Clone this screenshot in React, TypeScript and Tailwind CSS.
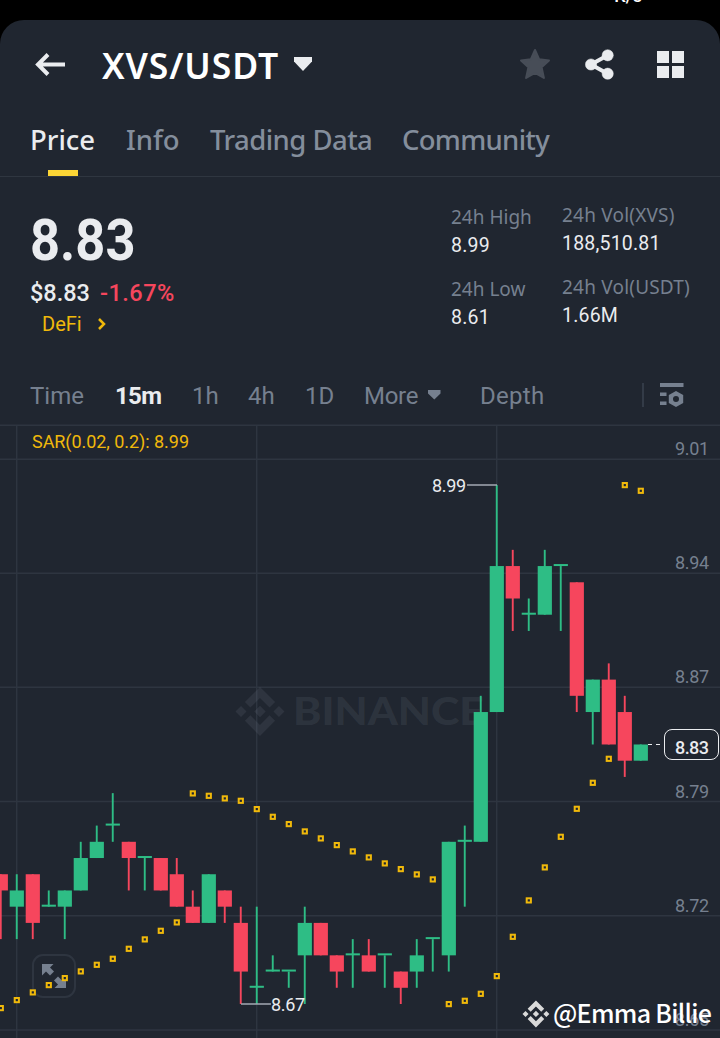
import React from "react";

type Candle = { o: number; c: number; h: number; l: number };

const STEP = 16;
const X0 = 0.7;
const BASE_Y = 1004;
const TICK = 16.22;

// open, close, high, low in cents above 8.67
const candles: Candle[] = [
  [8, 7, 8, 4],
  [6, 7, 8, 4],
  [8, 5, 8, 4],
  [6, 6, 7, 6],
  [6, 7, 7, 4],
  [7, 9, 10, 7],
  [9, 10, 11, 9],
  [11, 11, 13, 10],
  [10, 9, 10, 7],
  [9, 9, 9, 7],
  [9, 7, 9, 7],
  [8, 6, 9, 6],
  [6, 5, 7, 5],
  [5, 8, 8, 5],
  [7, 6, 7, 5],
  [5, 2, 6, 0],
  [1, 1, 6, 0],
  [2, 2, 3, 2],
  [2, 2, 2, 1],
  [3, 5, 6, 0],
  [5, 3, 5, 3],
  [3, 2, 3, 1],
  [3, 3, 4, 1],
  [3, 2, 4, 2],
  [3, 3, 3, 1],
  [2, 1, 2, 0],
  [2, 3, 4, 1],
  [4, 4, 4, 2],
  [3, 10, 10, 2],
  [10, 10, 11, 6],
  [10, 18, 19, 10],
  [18, 27, 32, 18],
  [27, 25, 28, 23],
  [24, 24, 25, 23],
  [24, 27, 28, 24],
  [27, 27, 27, 23],
  [26, 19, 26, 18],
  [18, 20, 20, 16],
  [20, 16, 21, 16],
  [18, 15, 19, 14],
  [15, 16, 16, 15],
].map(([o, c, h, l]) => ({ o, c, h, l }));

const sar = [
  1008, 1000, 992.3, 985, 978, 971.3, 964.7, 958.7, 948.7, 939.3, 930.7, 922.3,
  793.3, 795.7, 798.3, 800.7, 809, 816.7, 824, 831.3, 838.3, 845, 851.3, 857.3,
  863.3, 869, 874.3, 879.3, 1004, 1000.7, 993.7, 976, 936.7, 900.3, 867.3,
  836.7, 808.7, 782.7, 758.7, 485, 490.7,
];

const gridY = [425.3, 459.3, 573.3, 687.3, 801.5, 915.7, 1030];
const gridX = [16.7, 256.7, 496.7];

const axisLabels = [
  { text: "9.01", y: 455 },
  { text: "8.94", y: 569 },
  { text: "8.87", y: 683 },
  { text: "8.79", y: 798 },
  { text: "8.72", y: 912 },
  { text: "8.65", y: 1026 },
];

const priceY = (k: number) => BASE_Y - TICK * k;

function BinanceMark() {
  return (
    <path d="M24 0 38.8 14.8 33.4 20.2 24 10.8 14.6 20.2 9.2 14.8zM5.4 18.6 10.8 24 5.4 29.4 0 24zM42.6 18.6 48 24 42.6 29.4 37.2 24zM24 18.4 29.6 24 24 29.6 18.4 24zM14.6 27.8 24 37.2 33.4 27.8 38.8 33.2 24 48 9.2 33.2z" />
  );
}

function Header() {
  return (
    <div className="flex h-[88px] items-center pl-[34px] pr-[36px] text-[#eaecef]">
      <svg className="mt-px" width="32" height="26" viewBox="0 0 32 26" fill="none" stroke="currentColor" strokeWidth="4">
        <path d="M14 2.5 4 12.5 14 22.5M3.5 12.5H31" />
      </svg>
      <h1 className="ml-[36px] mt-[3px] w-[177px] whitespace-nowrap font-['Noto_Sans'] text-[35.5px] font-semibold leading-none tracking-[0.9px] text-white">
        XVS/USDT
      </h1>
      <svg className="ml-[15px]" width="18" height="15" viewBox="0 0 18 15" fill="currentColor">
        <path d="M0 0H18V4.5L9 14 0 4.5z" />
      </svg>
      <div className="ml-auto flex items-center">
        <svg width="32" height="32" viewBox="0 0 32 32" fill="#474d57" stroke="#474d57" strokeWidth="2" strokeLinejoin="round">
          <path d="M16 2 20.1 11.2 30 12.4 22.6 19.2 24.9 30 16 25 7.1 30 9.4 19.2 2 12.4 11.9 11.2z" />
        </svg>
        <svg className="ml-[34px]" width="29" height="31" viewBox="0 0 29 31" fill="currentColor" stroke="currentColor">
          <path d="M22.7 6.2 6 15.5 22.7 24.8" fill="none" strokeWidth="4" />
          <circle cx="22.7" cy="6.3" r="5.6" strokeWidth="0.5" />
          <circle cx="6" cy="15.5" r="5.6" strokeWidth="0.5" />
          <circle cx="22.7" cy="24.7" r="5.6" strokeWidth="0.5" />
        </svg>
        <div className="ml-[43px] grid grid-cols-2 gap-[3px]">
          <span className="size-[12px] bg-[#eaecef]" />
          <span className="size-[12px] bg-[#eaecef]" />
          <span className="size-[12px] bg-[#eaecef]" />
          <span className="size-[12px] bg-[#eaecef]" />
        </div>
      </div>
    </div>
  );
}

function Tabs() {
  return (
    <nav className="flex h-[69px] border-b border-[#2f3640] pl-[30px] font-['Noto_Sans'] text-[27.5px] font-medium leading-[64px] whitespace-nowrap text-[#848e9c]">
      <div className="relative w-[96px] text-[#eaecef]">
        Price
        <span className="absolute bottom-0 left-[18px] h-[6px] w-[30px] bg-[#fcd535]" />
      </div>
      <div className="w-[84px]">Info</div>
      <div className="w-[192px] tracking-[-0.55px]">Trading Data</div>
      <div className="tracking-[-0.7px]">Community</div>
    </nav>
  );
}

function Stat({ label, value }: { label: string; value: string }) {
  return (
    <div className="h-[72px] whitespace-nowrap leading-[28px]">
      <p className="font-['Noto_Sans'] text-[19px] text-[#76808f]">{label}</p>
      <p className="mt-px font-[Roboto] text-[19.5px] tracking-[0.2px] text-[#eaecef]">{value}</p>
    </div>
  );
}

function Summary() {
  return (
    <div className="flex h-[189px] pl-[30px]">
      <div className="w-[421px] font-[Roboto]">
        <p className="mt-[31px] w-fit origin-left scale-x-[0.92] text-[57px] font-bold leading-[66px] text-[#eaecef]">8.83</p>
        <p className="mt-[4px] flex text-[23.5px] font-medium leading-[30px]">
          <span className="w-[70px] text-[#eaecef]">$8.83</span>
          <span className="tracking-[0.5px] text-[#f6465d]">-1.67%</span>
        </p>
        <p className="ml-[12px] mt-px flex items-center text-[20px] leading-[30px] text-[#f0b90b]">
          DeFi
          <svg className="ml-[15px]" width="10" height="12" viewBox="0 0 10 12" fill="none" stroke="currentColor" strokeWidth="2.5">
            <path d="M2 1 7 6 2 11" />
          </svg>
        </p>
      </div>
      <div className="mt-[26px] w-[111px]">
        <Stat label="24h High" value="8.99" />
        <Stat label="24h Low" value="8.61" />
      </div>
      <div className="mt-[24px] tracking-[0.2px]">
        <Stat label="24h Vol(XVS)" value="188,510.81" />
        <Stat label="24h Vol(USDT)" value="1.66M" />
      </div>
    </div>
  );
}

function Intervals() {
  return (
    <div className="flex h-[58px] items-center pl-[30px] font-[Roboto] text-[24px] leading-[30px] whitespace-nowrap text-[#76808f]">
      <span className="mt-[2px] w-[85px]">Time</span>
      <span className="mt-[2px] w-[77px] font-bold tracking-[-0.7px] text-[#eaecef]">15m</span>
      <span className="mt-[2px] w-[56px]">1h</span>
      <span className="mt-[2px] w-[57px]">4h</span>
      <span className="mt-[2px] w-[59px]">1D</span>
      <span className="mt-[2px] w-[64px] tracking-[-0.3px]">More</span>
      <svg className="mr-[39px]" width="13" height="10" viewBox="0 0 13 10" fill="currentColor">
        <path d="M0 0H12.5V3.5L6.3 9.5 0 3.5z" />
      </svg>
      <span className="mt-[2px] w-[162px] tracking-[0.3px]">Depth</span>
      <span className="h-[24px] w-[2px] bg-[#333b47]" />
      <svg className="ml-[16px]" width="24" height="24" viewBox="0 0 24 24" fill="currentColor">
        <path d="M0 0H23.500V4H0zM0 9.500H6.500V13H0zM0 18.500H6.500V22H0z" />
        <path fillRule="evenodd" d="M16 8 23.200 12V20L16 24 8.800 20V12zM16 13A3 3 0 1 0 16 19A3 3 0 1 0 16 13z" />
      </svg>
    </div>
  );
}

function CandleShape({ candle, index }: { candle: Candle; index: number }) {
  const x = X0 + STEP * index;
  const color = candle.c >= candle.o ? "#2ebd85" : "#f6465d";
  const top = priceY(Math.max(candle.o, candle.c));
  const bottom = priceY(Math.min(candle.o, candle.c));
  const flat = candle.o === candle.c;
  return (
    <g fill={color}>
      <rect x={x - 0.9} y={priceY(candle.h)} width={1.9} height={priceY(candle.l) - priceY(candle.h)} />
      <rect x={x - 7} y={flat ? top - 2 : top} width={14.2} height={flat ? 2 : bottom - top} />
    </g>
  );
}

function Chart() {
  return (
    <svg className="block h-[614px] w-[720px]" viewBox="0 424 720 614">
      <g stroke="#2e3540" strokeWidth="1.5">
        {gridY.map((y) => (
          <line key={y} x1="0" x2="720" y1={y} y2={y} />
        ))}
        {gridX.map((x) => (
          <line key={x} x1={x} x2={x} y1="425" y2="1038" />
        ))}
      </g>

      <g fill="#848e9c" fillOpacity="0.140">
        <g transform="translate(235.500 687) scale(1.020)">
          <BinanceMark />
        </g>
        <text x="293" y="725" fontFamily="Lato, sans-serif" fontWeight="900" fontSize="38" textLength="191" lengthAdjust="spacingAndGlyphs">
          BINANCE
        </text>
      </g>

      <g fontFamily="Roboto, sans-serif" fontSize="18" fill="#76808f">
        {axisLabels.map((l) => (
          <text key={l.text} x="675" y={l.y} textLength="34">
            {l.text}
          </text>
        ))}
      </g>
      <text x="32" y="448" fontFamily="Roboto, sans-serif" fontSize="18" fill="#f0b90b" textLength="157">
        SAR(0.02, 0.2): 8.99
      </text>

      {/* fullscreen toggle */}
      <rect x="33" y="955" width="42" height="42" rx="10" fill="none" stroke="#2e3540" strokeWidth="2" />
      <path
        d="M42 964H53.500L50 967.500 54 971.500 50 975.500 46 971.500 42 975.500zM66 988H54.500L58 984.500 54 980.500 58 976.500 62 980.500 66 976.500z"
        fill="#76808f"
      />

      {candles.map((c, i) => (
        <CandleShape key={i} candle={c} index={i} />
      ))}

      {sar.map((y, i) => (
        <rect key={i} x={X0 + STEP * i - 2} y={y - 2} width="4.200" height="4.200" fill="#202630" stroke="#f0b90b" strokeWidth="2" />
      ))}

      <g fontFamily="Roboto, sans-serif" fontSize="18" fill="#eaecef">
        <path d="M467 485H497M241 1004H271" stroke="#a3a9b3" strokeWidth="1.300" />
        <text x="432" y="492" textLength="34">8.99</text>
        <text x="271" y="1011" textLength="34">8.67</text>
        <path d="M648 744.500H664" stroke="#eaecef" strokeWidth="1" strokeDasharray="4 4" />
        <rect x="664.500" y="729.500" width="54" height="30" rx="7.500" fill="#202630" stroke="#eaecef" strokeWidth="1" />
        <text x="675" y="754" fontWeight="500" textLength="34">8.83</text>
      </g>

      <g transform="translate(522.500 1000.500) scale(0.560)" fill="#d9d9d9">
        <BinanceMark />
      </g>
      <text x="553" y="1023" fontFamily="'Noto Sans CJK SC', sans-serif" fontSize="25" fontWeight="500" fill="#fff" textLength="159">
        @Emma Billie
      </text>
    </svg>
  );
}

export default function App(): React.JSX.Element {
  return (
    <div className="h-[1038px] w-[720px] overflow-hidden bg-black">
      <div className="flex h-[20px] items-start justify-end overflow-hidden pr-[78px]">
        <span className="-mt-[14px] font-[Roboto] text-[18px] font-medium leading-[20px] text-white">K/s</span>
      </div>
      <div className="h-[1018px] rounded-t-[24px] bg-[#202630]">
        <Header />
        <Tabs />
        <Summary />
        <Intervals />
        <Chart />
      </div>
    </div>
  );
}
